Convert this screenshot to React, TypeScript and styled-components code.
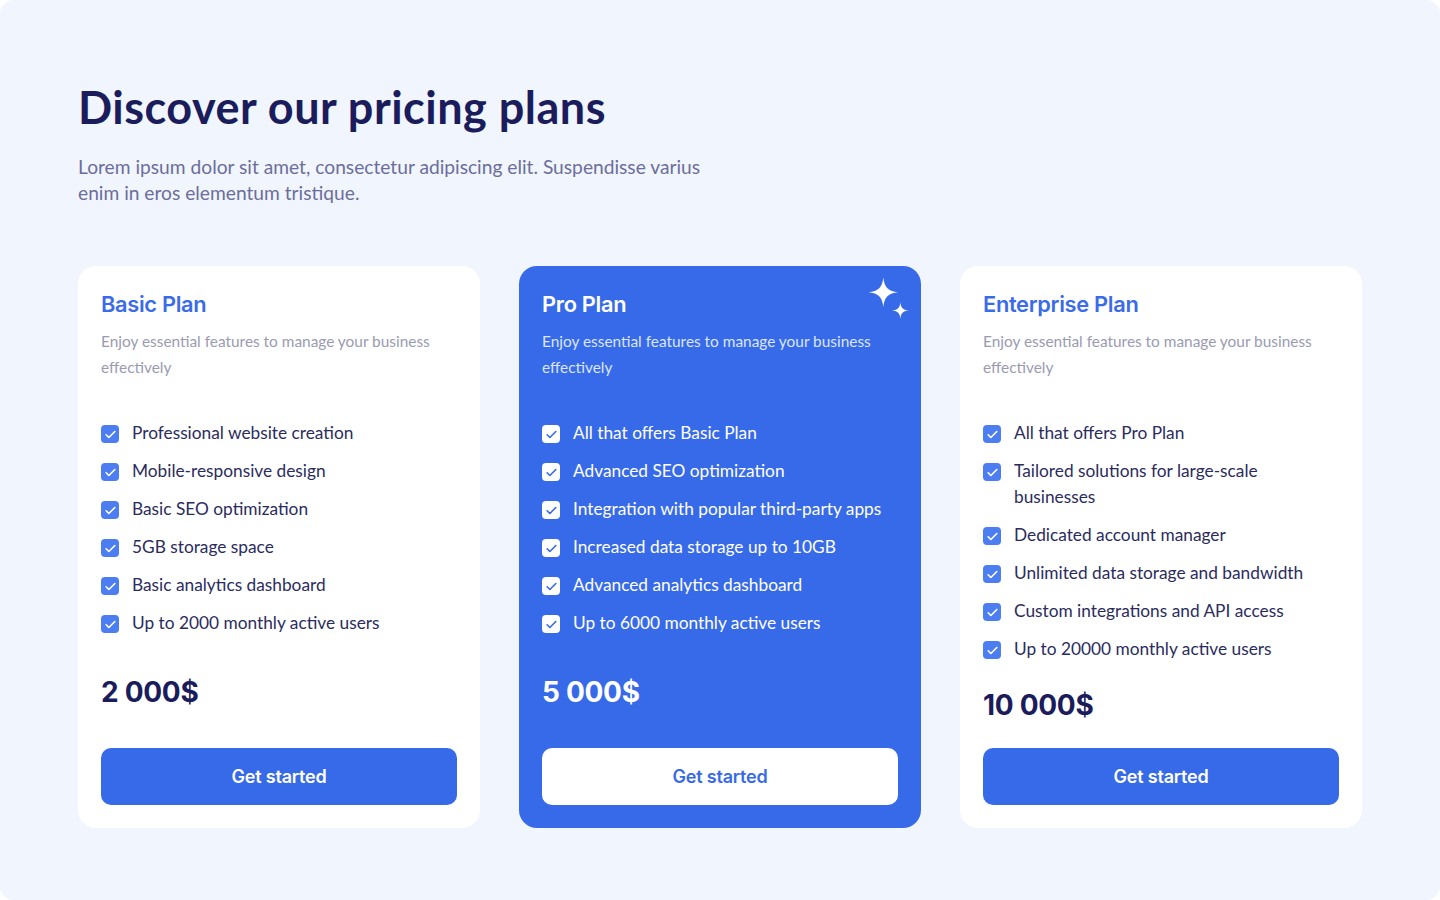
import React from "react";
import styled, { createGlobalStyle } from "styled-components";

const Global = createGlobalStyle`
  html, body { margin: 0; padding: 0; background: #ffffff; }
  * { box-sizing: border-box; }
  body { font-family: "Lato", "Liberation Sans", sans-serif; }
`;

const Page = styled.main`
  width: 1440px;
  height: 900px;
  background: #f0f5fe;
  border-radius: 14px;
  padding: 80px 78px 0 78px;
`;

const Heading = styled.h1`
  margin: 0;
  font-family: "Lato", "Liberation Sans", sans-serif;
  font-weight: 700;
  font-size: 45px;
  line-height: 54px;
  letter-spacing: 0.5px;
  color: #1b1c5c;
`;

const Lead = styled.p`
  margin: 20px 0 0 0;
  width: 660px;
  font-size: 19.2px;
  line-height: 26px;
  color: #6c6d9b;
`;

const Grid = styled.section`
  margin-top: 60px;
  display: grid;
  grid-template-columns: repeat(3, 402px);
  column-gap: 39px;
  align-items: stretch;
`;

const Card = styled.article<{ $featured?: boolean }>`
  position: relative;
  display: flex;
  flex-direction: column;
  background: ${(p) => (p.$featured ? "#376ae9" : "#ffffff")};
  border-radius: 18px;
  padding: 22px 23px 23px 23px;
`;

const Title = styled.h2<{ $featured?: boolean }>`
  margin: 0;
  font-family: "Inter", "Liberation Sans", sans-serif;
  font-weight: 600;
  font-size: 21.8px;
  line-height: 32px;
  letter-spacing: -0.3px;
  color: ${(p) => (p.$featured ? "#ffffff" : "#3a6be9")};
`;

const Desc = styled.p<{ $featured?: boolean }>`
  margin: 8px 0 0 0;
  font-size: 15.4px;
  line-height: 26px;
  color: ${(p) => (p.$featured ? "#dbe5fc" : "#9a9bb2")};
  width: 345px;
`;

const List = styled.ul`
  list-style: none;
  margin: 40px 0 0 0;
  padding: 0;
  display: flex;
  flex-direction: column;
  gap: 12px;
`;

const Item = styled.li<{ $featured?: boolean }>`
  display: flex;
  align-items: flex-start;
  gap: 13px;
  font-size: 17.3px;
  line-height: 26px;
  color: ${(p) => (p.$featured ? "#ffffff" : "#2b2c5e")};
`;

const Box = styled.span<{ $featured?: boolean }>`
  flex: 0 0 18px;
  width: 18px;
  height: 18px;
  margin-top: 5px;
  border-radius: 4px;
  background: ${(p) => (p.$featured ? "#ffffff" : "#4c7ef1")};
  display: flex;
  align-items: center;
  justify-content: center;
`;

const ItemText = styled.span`
  max-width: 312px;
`;

const PriceArea = styled.div`
  flex: 1;
  display: flex;
  align-items: center;
  padding: 28px 0;
`;

const Price = styled.div<{ $featured?: boolean }>`
  font-family: "Inter", "Liberation Sans", sans-serif;
  font-weight: 700;
  font-size: 28px;
  line-height: 30px;
  letter-spacing: -0.3px;
  color: ${(p) => (p.$featured ? "#ffffff" : "#1b1c5c")};
`;

const Button = styled.button<{ $featured?: boolean }>`
  width: 100%;
  height: 57px;
  border: none;
  border-radius: 10px;
  background: ${(p) => (p.$featured ? "#ffffff" : "#376ae9")};
  color: ${(p) => (p.$featured ? "#376ae9" : "#ffffff")};
  font-family: "Inter", "Liberation Sans", sans-serif;
  font-weight: 600;
  font-size: 18px;
  letter-spacing: -0.2px;
  cursor: pointer;
`;

const Sparkle = styled.svg`
  position: absolute;
  top: 7px;
  right: 7px;
`;

const Check = ({ featured }: { featured?: boolean }) => (
  <svg width="13" height="13" viewBox="0 0 24 24" fill="none">
    <path
      d="M4 12.5l5 5L20 6.5"
      stroke={featured ? "#376ae9" : "#ffffff"}
      strokeWidth="3"
      strokeLinecap="round"
      strokeLinejoin="round"
    />
  </svg>
);

type Plan = {
  name: string;
  features: string[];
  price: string;
  featured?: boolean;
};

const plans: Plan[] = [
  {
    name: "Basic Plan",
    features: [
      "Professional website creation",
      "Mobile-responsive design",
      "Basic SEO optimization",
      "5GB storage space",
      "Basic analytics dashboard",
      "Up to 2000 monthly active users",
    ],
    price: "2 000$",
  },
  {
    name: "Pro Plan",
    featured: true,
    features: [
      "All that offers Basic Plan",
      "Advanced SEO optimization",
      "Integration with popular third-party apps",
      "Increased data storage up to 10GB",
      "Advanced analytics dashboard",
      "Up to 6000 monthly active users",
    ],
    price: "5 000$",
  },
  {
    name: "Enterprise Plan",
    features: [
      "All that offers Pro Plan",
      "Tailored solutions for large-scale businesses",
      "Dedicated account manager",
      "Unlimited data storage and bandwidth",
      "Custom integrations and API access",
      "Up to 20000 monthly active users",
    ],
    price: "10 000$",
  },
];

export default function App() {
  return (
    <>
      <Global />
      <Page>
        <Heading>Discover our pricing plans</Heading>
        <Lead>
          Lorem ipsum dolor sit amet, consectetur adipiscing elit. Suspendisse varius enim in
          eros elementum tristique.
        </Lead>
        <Grid>
          {plans.map((p) => (
            <Card key={p.name} $featured={p.featured}>
              {p.featured && (
                <Sparkle width="50" height="50" viewBox="0 0 44 44">
                  <path
                    d="M17 4 C17.8 12.5 21.5 16.2 30 17 C21.5 17.8 17.8 21.5 17 30 C16.2 21.5 12.5 17.8 4 17 C12.5 16.2 16.2 12.5 17 4 Z"
                    fill="#ffffff"
                  />
                  <path
                    d="M32 25.5 C32.4 30.2 33.8 32.6 39.5 33 C33.8 33.4 32.4 35.8 32 40.5 C31.6 35.8 30.2 33.4 24.5 33 C30.2 32.6 31.6 30.2 32 25.5 Z"
                    fill="#ffffff"
                  />
                </Sparkle>
              )}
              <Title $featured={p.featured}>{p.name}</Title>
              <Desc $featured={p.featured}>
                Enjoy essential features to manage your business effectively
              </Desc>
              <List>
                {p.features.map((f) => (
                  <Item key={f} $featured={p.featured}>
                    <Box $featured={p.featured}>
                      <Check featured={p.featured} />
                    </Box>
                    <ItemText>{f}</ItemText>
                  </Item>
                ))}
              </List>
              <PriceArea>
                <Price $featured={p.featured}>{p.price}</Price>
              </PriceArea>
              <Button $featured={p.featured}>Get started</Button>
            </Card>
          ))}
        </Grid>
      </Page>
    </>
  );
}
